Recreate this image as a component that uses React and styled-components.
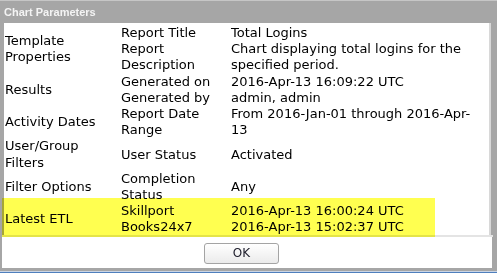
import styled, { createGlobalStyle } from "styled-components";

const GlobalStyle = createGlobalStyle`
  html, body {
    margin: 0;
    padding: 0;
    background: #ffffff;
  }
`;

const Page = styled.div`
  width: 497px;
  height: 273px;
  display: flex;
  flex-direction: column;
  overflow: hidden;
`;

const Dialog = styled.div`
  position: relative;
  height: 271px;
  display: flex;
  flex-direction: column;
  background: #a6a6a6;
  border-top: 1px solid #c6c6c6;
  box-sizing: border-box;
`;

const TitleBar = styled.div`
  height: 22px;
  line-height: 22px;
  padding-left: 4px;
  font-family: "Liberation Sans", Arial, sans-serif;
  font-weight: bold;
  font-size: 11px;
  color: #f4f4f4;
`;

const Panel = styled.div`
  margin-left: 4px;
  width: 487px;
  height: 212px;
  padding-top: 2px;
  box-sizing: border-box;
  background: #ffffff;
  border-right: 2px solid #d8d8d8;
  font-family: "DejaVu Sans", Verdana, sans-serif;
  font-size: 13px;
  line-height: 16.2px;
  color: #000;
`;

const Section = styled.div`
  display: grid;
  grid-template-columns: 117px 1fr;
  align-items: center;
`;

const Label = styled.div`
  padding-left: 1px;
  padding-right: 4px;
`;

const Pairs = styled.div`
  display: flex;
  flex-direction: column;
`;

const Pair = styled.div`
  display: grid;
  grid-template-columns: 110px 1fr;
  align-items: center;
`;

const Key = styled.div`
  padding-right: 4px;
`;

const Value = styled.div`
  white-space: nowrap;
`;

const Divider = styled.div`
  margin-left: 2px;
  width: 491px;
  height: 2px;
  background: #e4e4e4;
`;

const Footer = styled.div`
  margin-left: 2px;
  width: 490px;
  height: 31px;
  background: #ffffff;
  display: flex;
  align-items: center;
  padding-left: 202px;
  box-sizing: border-box;
`;

const Button = styled.button`
  width: 75px;
  height: 21px;
  margin-top: 1px;
  border: 1px solid #a4a4a4;
  border-radius: 3px;
  background: linear-gradient(#ffffff, #ebebeb);
  font-family: "DejaVu Sans", Verdana, sans-serif;
  font-size: 12px;
  color: #1c1c2a;
  padding: 0;
`;

const Highlight = styled.div`
  position: absolute;
  left: 2px;
  top: 197px;
  width: 433px;
  height: 39px;
  background: #ffff50;
  mix-blend-mode: multiply;
  pointer-events: none;
`;

const PageEdge = styled.div`
  height: 2px;
  background: #4f7fbd;
  border-top: 1px solid #c9d4e4;
  box-sizing: border-box;
`;

const sections = [
  {
    label: "Template Properties",
    pairs: [
      ["Report Title", "Total Logins"],
      ["Report Description", <>Chart displaying total logins for the<br />specified period.</>],
    ],
  },
  {
    label: "Results",
    pairs: [
      ["Generated on", "2016-Apr-13 16:09:22 UTC"],
      ["Generated by", "admin, admin"],
    ],
  },
  {
    label: "Activity Dates",
    pairs: [["Report Date Range", <>From 2016-Jan-01 through 2016-Apr-<br />13</>]],
  },
  {
    label: "User/Group Filters",
    pairs: [["User Status", "Activated"]],
  },
  {
    label: "Filter Options",
    pairs: [["Completion Status", "Any"]],
  },
  {
    label: "Latest ETL",
    pairs: [
      ["Skillport", "2016-Apr-13 16:00:24 UTC"],
      ["Books24x7", "2016-Apr-13 15:02:37 UTC"],
    ],
  },
];

export default function App() {
  return (
    <Page>
      <GlobalStyle />
      <Dialog>
        <TitleBar>Chart Parameters</TitleBar>
        <Panel>
          {sections.map((s) => (
            <Section key={s.label}>
              <Label>{s.label}</Label>
              <Pairs>
                {s.pairs.map(([k, v]) => (
                  <Pair key={k}>
                    <Key>{k}</Key>
                    <Value>{v}</Value>
                  </Pair>
                ))}
              </Pairs>
            </Section>
          ))}
        </Panel>
        <Divider />
        <Footer>
          <Button>OK</Button>
        </Footer>
        <Highlight />
      </Dialog>
      <PageEdge />
    </Page>
  );
}
